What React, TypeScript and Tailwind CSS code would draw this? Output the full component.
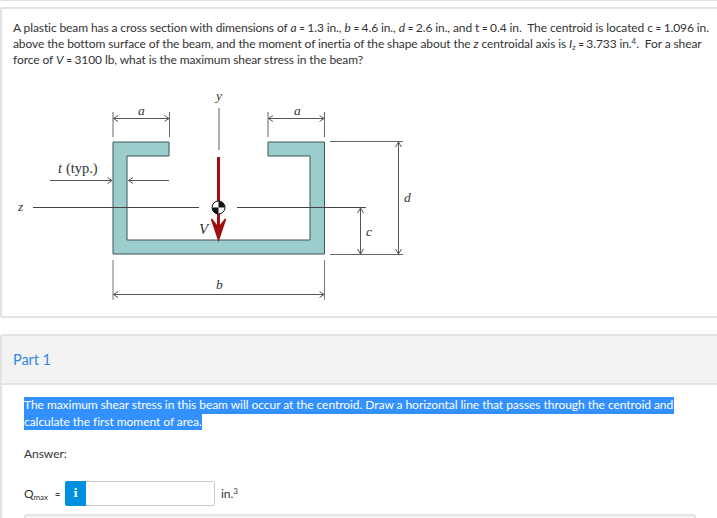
import React from "react";

function Dim({ d, w = 1, c = "#555" }: { d: string; w?: number; c?: string }) {
  return <path d={d} fill="none" stroke={c} strokeWidth={w} />;
}

// the equals sign is tiny and heavy in the picture
function Eq() {
  return <span className="text-[9px] leading-none font-black tracking-[-0.300px]">=</span>;
}

// the cross section, coordinates follow the picture
function BeamDiagram() {
  const label = { fontFamily: '"Liberation Serif", serif', fontStyle: "italic", fontSize: 13.5, fill: "#333" };
  return (
    <svg width="420" height="230" viewBox="0 0 420 230" className="block">
      <g transform="translate(-10,-85)">
        <path
          d="M113 142H169V156H127V240H310V156H268V142H324.500V254H113Z"
          fill="#9bcdcd"
          stroke="#3f5556"
          strokeWidth="1"
        />
        {/* z axis */}
        <Dim d="M33 207.500H199M237 207.500H366" c="#444" />
        {/* y axis */}
        <Dim d="M219 108V150" w={1.200} c="#777" />
        {/* a dimensions */}
        <Dim d="M113 112V137M169.500 112V137M268 112V137M324.500 112V137" c="#666" />
        <Dim d="M113 118.500H169M268 118.500H324" />
        <Dim d="M118 115.500L113.500 118.500L118 121.500M164.500 115.500L169 118.500L164.500 121.500M273 115.500L268.500 118.500L273 121.500M319.500 115.500L324 118.500L319.500 121.500" />
        {/* t (typ.) */}
        <Dim d="M50 180.500H112M128 180.500H169" />
        <Dim d="M107.500 177.500L112 180.500L107.500 183.500M133 177.500L128.500 180.500L133 183.500" />
        {/* d and c */}
        <Dim d="M330 141.500H403M330 254.500H403" c="#666" />
        <Dim d="M398.500 142V254M360.500 208V254" />
        <Dim d="M395.500 147L398.500 142L401.500 147M395.500 249L398.500 254L401.500 249M357.500 213L360.500 208L363.500 213M357.500 249L360.500 254L363.500 249" />
        {/* b */}
        <Dim d="M113 260V300M324.500 260V300" c="#777" />
        <Dim d="M113 294.500H324" />
        <Dim d="M118 291.500L113.500 294.500L118 297.500M319.500 291.500L324 294.500L319.500 297.500" />
        {/* shear force */}
        <path d="M218.500 157V232" stroke="#a01010" strokeWidth="3" fill="none" />
        <path d="M211.500 219L218.500 228L225.500 219L218.500 240Z" fill="#a01010" stroke="#a01010" strokeWidth="1.500" />
        {/* centroid */}
        <circle cx="218.500" cy="207.500" r="6.500" fill="#fff" stroke="#111" strokeWidth="1" />
        <path d="M218.500 207.500V201A6.500 6.500 0 0 1 225 207.500ZM218.500 207.500V214A6.500 6.500 0 0 1 212 207.500Z" fill="#111" />
        <text x="138" y="115" {...label}>a</text>
        <text x="294" y="115" {...label}>a</text>
        <text x="216" y="100" {...label}>y</text>
        <text x="58" y="173" {...label} fontSize={14.5}>t</text>
        <text x="66" y="173" {...label} fontSize={14.5} fontStyle="normal">(typ.)</text>
        <text x="18" y="211" {...label}>z</text>
        <text x="199" y="234" {...label} fontSize={15}>V</text>
        <text x="216" y="289" {...label}>b</text>
        <text x="404" y="202" {...label}>d</text>
        <text x="366" y="236" {...label}>c</text>
      </g>
    </svg>
  );
}

function App() {
  return (
    <div className="h-[518px] w-[717px] overflow-hidden bg-white font-['Lato','Open_Sans',sans-serif] text-[12px] leading-[16px] tracking-[-0.050px] text-[#333]">
      <div className="h-px bg-[#e2e2e2]" />
      <div className="mt-[6px] h-[311px] w-[730px] rounded-[3px] border-2 border-[#e3e3e3] pl-[11px] pt-[11px]">
        <div className="h-[16px] whitespace-nowrap tracking-[-0.100px]">
          A plastic beam has a cross section with dimensions of <i>a</i> <Eq /> 1.3 in., <i>b</i> <Eq /> 4.6 in., <i>d</i> <Eq /> 2.6 in., and t <Eq /> 0.4 in.&nbsp; The centroid is located c <Eq /> 1.096 in.
        </div>
        <div className="h-[16px] whitespace-nowrap tracking-[-0.100px]">
          above the bottom surface of the beam, and the moment of inertia of the shape about the <i>z</i> centroidal axis is <i>I</i>
          <sub className="text-[8px]">
            <i>z</i>
          </sub>{" "}
          <Eq /> 3.733 in.<sup className="text-[8px]">4</sup>.&nbsp; For a shear
        </div>
        <div className="h-[16px] whitespace-nowrap tracking-[-0.080px]">
          force of <i>V</i> <Eq /> 3100 lb, what is the maximum shear stress in the beam?
        </div>
        <div className="ml-[-3px] mt-[17px]">
          <BeamDiagram />
        </div>
      </div>
      <div className="mt-[16px] w-[730px] rounded-[3px] border-l-2 border-t-2 border-[#e3e3e3]">
        <div className="h-[49px] border-b-2 border-[#e3e3e3] bg-[#f3f3f3] pl-[11px] pt-[16px] text-[14.500px] text-[#2f8ae0]">
          Part 1
        </div>
        <div className="pl-[22px] pt-[12px] text-white">
          <div className="h-[17px] w-fit bg-[#3390ff] pr-px">
            The maximum shear stress in this beam will occur at the centroid. Draw a horizontal line that passes through the centroid and
          </div>
          <div className="h-[16px] w-fit bg-[#3390ff]">calculate the first moment of area.</div>
          <div className="mt-[16px] text-[#333]">Answer:</div>
          <div className="mt-[19px] flex items-center text-[#333]">
            <span className="w-[31px]">
              Q<sub className="text-[8px]">max</sub>
            </span>
            <span className="w-[10px]">
              <Eq />
            </span>
            <div className="flex h-[25px] w-[150px] rounded-[2px] border border-[#ccc]">
              <div className="-my-px -ml-px flex h-[25px] w-[21px] items-center justify-center rounded-l-[2px] bg-[#0090df] font-['DejaVu_Serif',serif] text-[11px] font-bold text-white">
                i
              </div>
            </div>
            <span className="ml-[6px]">
              in.<sup className="text-[8px]">3</sup>
            </span>
          </div>
          <div className="mt-[8px] h-[30px] w-[672px] rounded-[3px] border-2 border-[#e3e3e3] bg-[#f3f3f3]" />
        </div>
      </div>
    </div>
  );
}

export default App;
